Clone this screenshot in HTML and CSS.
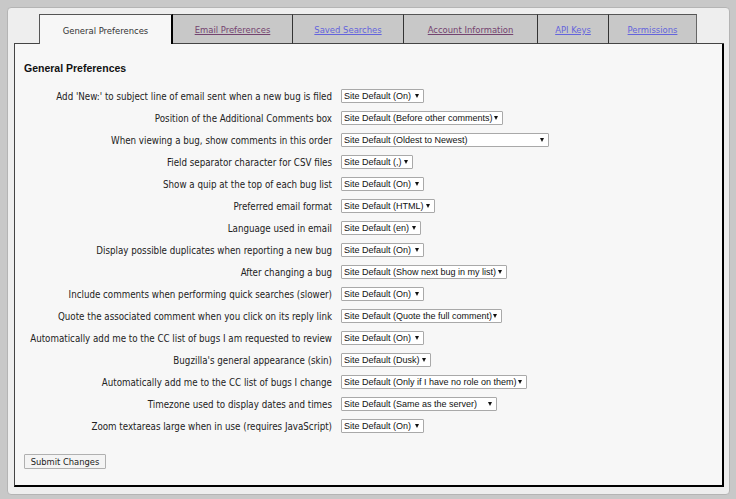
FILE: index.html
```html
<!DOCTYPE html>
<html>
<head>
<meta charset="utf-8">
<title>User Preferences</title>
<link rel="stylesheet" href="styles.css">
</head>
<body>
<div class="panel">
  <div class="tabs">
    <div class="tab-spacer"></div>
    <div class="tab active t-general">General Preferences</div>
    <div class="tab t-email"><a class="visited" href="#">Email Preferences</a></div>
    <div class="tab t-saved"><a href="#">Saved Searches</a></div>
    <div class="tab t-account"><a class="visited" href="#">Account Information</a></div>
    <div class="tab t-api"><a href="#">API Keys</a></div>
    <div class="tab t-perm"><a href="#">Permissions</a></div>
    <div class="tab-fill"></div>
  </div>
  <div class="content">
    <h2 class="heading">General Preferences</h2>
    <div class="prefs">
      <label>Add 'New:' to subject line of email sent when a new bug is filed</label>
      <span class="sel w83"><select><option>Site Default (On)</option></select></span>
      <label>Position of the Additional Comments box</label>
      <span class="sel w162"><select><option>Site Default (Before other comments)</option></select></span>
      <label>When viewing a bug, show comments in this order</label>
      <span class="sel w208"><select><option>Site Default (Oldest to Newest)</option></select></span>
      <label>Field separator character for CSV files</label>
      <span class="sel w72"><select><option>Site Default (,)</option></select></span>
      <label>Show a quip at the top of each bug list</label>
      <span class="sel w83"><select><option>Site Default (On)</option></select></span>
      <label>Preferred email format</label>
      <span class="sel w94"><select><option>Site Default (HTML)</option></select></span>
      <label>Language used in email</label>
      <span class="sel w80"><select><option>Site Default (en)</option></select></span>
      <label>Display possible duplicates when reporting a new bug</label>
      <span class="sel w83"><select><option>Site Default (On)</option></select></span>
      <label>After changing a bug</label>
      <span class="sel w166"><select><option>Site Default (Show next bug in my list)</option></select></span>
      <label>Include comments when performing quick searches (slower)</label>
      <span class="sel w83"><select><option>Site Default (On)</option></select></span>
      <label>Quote the associated comment when you click on its reply link</label>
      <span class="sel w161"><select><option>Site Default (Quote the full comment)</option></select></span>
      <label>Automatically add me to the CC list of bugs I am requested to review</label>
      <span class="sel w83"><select><option>Site Default (On)</option></select></span>
      <label>Bugzilla's general appearance (skin)</label>
      <span class="sel w90"><select><option>Site Default (Dusk)</option></select></span>
      <label>Automatically add me to the CC list of bugs I change</label>
      <span class="sel w186"><select><option>Site Default (Only if I have no role on them)</option></select></span>
      <label>Timezone used to display dates and times</label>
      <span class="sel w156"><select><option>Site Default (Same as the server)</option></select></span>
      <label>Zoom textareas large when in use (requires JavaScript)</label>
      <span class="sel w83"><select><option>Site Default (On)</option></select></span>
    </div>
    <button class="submit" type="button">Submit Changes</button>
  </div>
</div>
</body>
</html>
```

FILE: styles.css
```css
html, body {
  margin: 0;
  padding: 0;
}
body {
  background: #c8c8c8;
  font-family: "DejaVu Sans Condensed", "DejaVu Sans", sans-serif;
  font-stretch: condensed;
  font-size: 9.3px;
  color: #222;
}
.panel {
  margin: 7px 6px 3px 7px;
  padding: 6px 5px 7px 6px;
  background: #eeeeee;
  border: 1px solid #b4b4b4;
  border-radius: 4px;
}
.tabs {
  display: flex;
  height: 30px;
}
.tab-spacer {
  width: 25px;
  border-bottom: 1px solid #444;
}
.tab-fill {
  flex: 1;
  border-bottom: 1px solid #444;
}
.tab {
  box-sizing: border-box;
  height: 30px;
  display: flex;
  align-items: center;
  justify-content: center;
  background: #c8c8c8;
  border-top: 1px solid #555;
  border-right: 1px solid #333;
  border-bottom: 1px solid #444;
  padding-top: 1px;
  font-size: 9.4px;
}
.tab.active {
  background: #f7f7f7;
  border-left: 1px solid #555;
  border-right: 2px solid #000;
  border-bottom: none;
  color: #333;
}
.t-general { width: 134px; }
.t-email { width: 120px; }
.t-saved { width: 111px; }
.t-account { width: 134px; }
.t-api { width: 71px; }
.t-perm { width: 88px; border-right-color: #666; }
.tab a {
  color: #6464dc;
  text-decoration: underline;
}
.tab a.visited {
  color: #74436f;
}
.content {
  background: #f7f7f7;
  border-left: 1px solid #444;
  border-right: 2px solid #000;
  border-bottom: 2px solid #000;
  padding: 17px 10px 16px 9px;
}
.heading {
  margin: 0 0 10px 0;
  font-family: "Liberation Sans", Arial, sans-serif;
  font-stretch: normal;
  font-weight: bold;
  font-size: 10.5px;
  line-height: 14px;
  color: #111;
}
.prefs {
  display: grid;
  grid-template-columns: 308px auto;
  grid-auto-rows: 22px;
  column-gap: 9px;
  align-items: center;
  justify-items: start;
}
.prefs label {
  justify-self: end;
  text-align: right;
  white-space: nowrap;
  font-size: 9.7px;
}
.sel {
  position: relative;
  display: inline-block;
}
.sel select {
  -webkit-appearance: none;
  appearance: none;
  box-sizing: border-box;
  height: 14px;
  margin: 0;
  padding: 0 0 0 2px;
  border: 1px solid #a9a9a9;
  border-radius: 1px;
  background: #fff;
  color: #111;
  font-family: "Liberation Sans", Arial, sans-serif;
  font-size: 9px;
  line-height: 12px;
  display: block;
}
.sel::after {
  content: "";
  position: absolute;
  right: 5px;
  top: 5px;
  border-left: 2.5px solid transparent;
  border-right: 2.5px solid transparent;
  border-top: 4px solid #111;
}
.w72 select { width: 72px; }
.w80 select { width: 80px; }
.w83 select { width: 83px; }
.w90 select { width: 90px; }
.w94 select { width: 94px; }
.w156 select { width: 156px; }
.w161 select { width: 161px; }
.w162 select { width: 162px; }
.w166 select { width: 166px; }
.w186 select { width: 186px; }
.w208 select { width: 208px; }
.submit {
  display: block;
  margin: 17px 0 0 0;
  box-sizing: border-box;
  width: 82px;
  height: 15px;
  padding: 0;
  font-family: "DejaVu Sans Condensed", "DejaVu Sans", sans-serif;
  font-stretch: condensed;
  font-size: 9.3px;
  color: #222;
  background: #f4f4f4;
  border: 1px solid #b0b0b0;
  border-radius: 1px;
}
```
